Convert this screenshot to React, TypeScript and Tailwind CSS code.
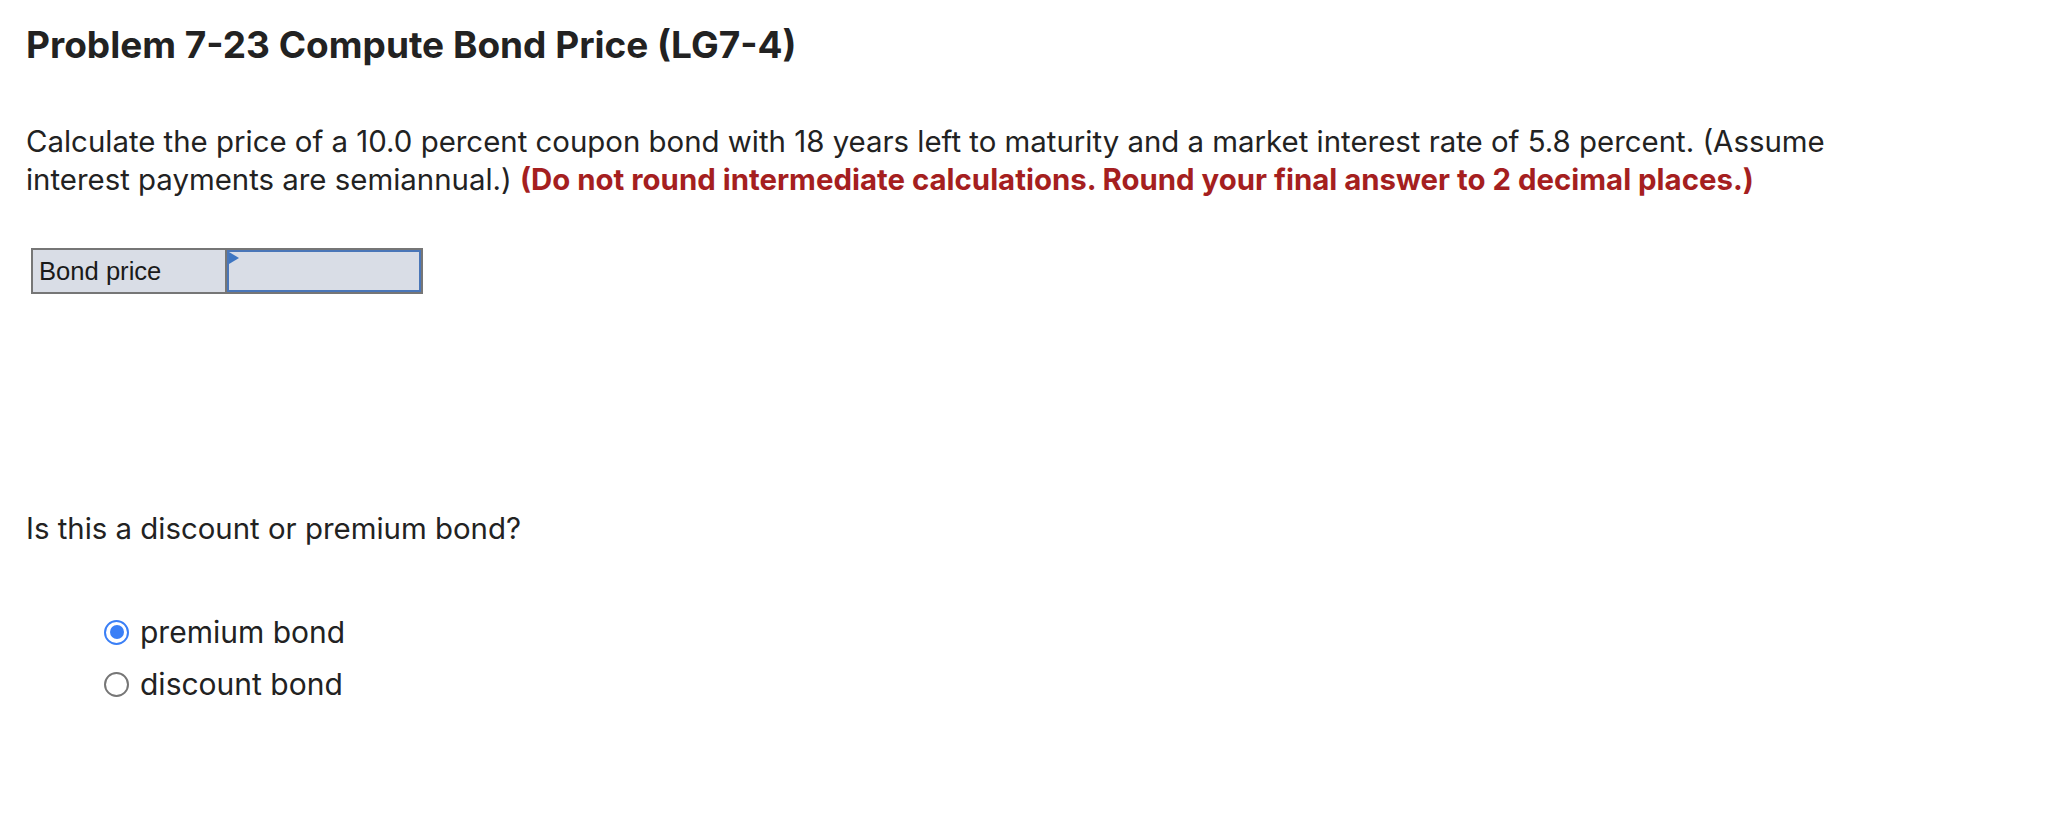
import React from "react";

const options = [
  { label: "premium bond", checked: true },
  { label: "discount bond", checked: false },
];

function Radio({ checked }: { checked: boolean }) {
  if (checked) {
    return (
      <span className="flex h-[25px] w-[25px] shrink-0 items-center justify-center rounded-full border-[2.5px] border-[#3a7ff6] bg-white">
        <span className="h-[14px] w-[14px] rounded-full bg-[#3a7ff6]" />
      </span>
    );
  }
  return <span className="h-[25px] w-[25px] shrink-0 rounded-full border-2 border-[#767676] bg-white" />;
}

export default function App() {
  return (
    <div className="min-h-screen bg-white px-[26px] pt-[25px] font-['Inter','Lato',sans-serif] text-[#222222]">
      <h1 className="text-[37px] font-bold leading-[40px]">Problem 7-23 Compute Bond Price (LG7-4)</h1>

      <p className="mt-[58px] max-w-[1840px] text-[29.4px] leading-[38px]">
        Calculate the price of a 10.0 percent coupon bond with 18 years left to maturity and a market interest rate of
        5.8 percent. (Assume interest payments are semiannual.){" "}
        <strong className="font-bold text-[#a51f1f]">
          (Do not round intermediate calculations. Round your final answer to 2 decimal places.)
        </strong>
      </p>

      {/* answer table */}
      <div className="ml-[5px] mt-[49px] flex w-[392px] border-2 border-[#767676] bg-[#d9dde6] font-['Liberation_Sans',Arial,sans-serif]">
        <div className="flex h-[42px] w-[194px] items-center border-r-2 border-[#767676] pl-[6px] text-[25.6px] text-[#1a1a1a]">
          Bond price
        </div>
        <div className="relative h-[42px] flex-1 border-2 border-[#4a76b8]">
          <span className="absolute left-0 top-0 h-0 w-0 border-y-[6px] border-l-[10px] border-y-transparent border-l-[#3e76c2]" />
        </div>
      </div>

      <p className="mt-[216px] text-[29.4px] leading-[38px]">Is this a discount or premium bond?</p>

      <div className="ml-[78px] mt-[65px] flex flex-col gap-[14px]">
        {options.map((o) => (
          <label key={o.label} className="flex h-[38px] items-center gap-[11px] text-[30px] leading-[38px]">
            <Radio checked={o.checked} />
            <span>{o.label}</span>
          </label>
        ))}
      </div>
    </div>
  );
}
